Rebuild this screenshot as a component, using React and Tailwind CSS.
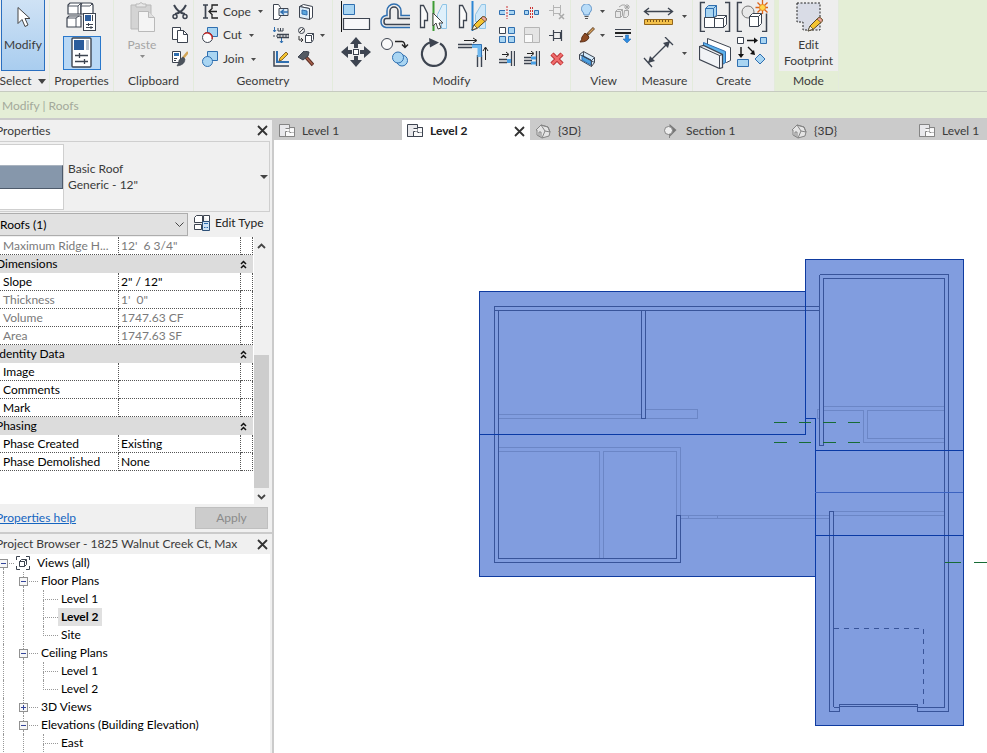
import React from "react";

const INK = "#3d4450";
const SKY = "#a9d5f2";
const BLUE = "#2f6fb0";

/* Icon drawings share one coordinate sheet; x and y select the part to show. */
function Icon({ x, y, w = 16, h = 16, children }) {
  return (
    <svg
      className="block shrink-0"
      width={w}
      height={h}
      viewBox={`${x} ${y} ${w} ${h}`}
      fill="none"
      stroke={INK}
      aria-hidden="true"
    >
      {children}
    </svg>
  );
}

function Big({ x, y, children }) {
  return (
    <Icon x={x} y={y} w={32} h={32}>
      {children}
    </Icon>
  );
}

function Caret() {
  return (
    <svg className="block shrink-0" width="5" height="3" viewBox="0 0 5 3" aria-hidden="true">
      <path d="M0 0h5L2.500 3z" fill="#4a4a4a" />
    </svg>
  );
}

function Tool({ label, className = "", children }) {
  return (
    <button type="button" aria-label={label} className={`flex items-center ${className}`}>
      {children}
    </button>
  );
}

function Panel({ title, className = "", titleClass = "", children }) {
  return (
    <section className={`flex shrink-0 flex-col border-r border-[#e3ebdc] bg-[#eeeeee] ${className}`}>
      <div className="flex h-[71px]">{children}</div>
      <h2 className={`flex h-5 items-center justify-center ${titleClass}`}>{title}</h2>
    </section>
  );
}

function Pencil({ x, y }) {
  return (
    <g transform={`translate(${x} ${y})`}>
      <path d="M0 14l2-5 8-8q2-1 3.500 .5t.5 3l-9 8z" fill="#f4c430" stroke="#5b4520" />
      <path d="M0 14l2-5 3 3z" fill="#fff3d0" stroke="#3b3b3b" strokeWidth=".7" />
      <path d="M10 1q2-1 3.500 .5t.5 3l-1 1-4-3.500z" fill="#f0a9a0" stroke="#5b4520" strokeWidth=".7" />
    </g>
  );
}

function Ribbon() {
  return (
    <header className="flex h-[92px] shrink-0 overflow-hidden border-b border-[#c6cbc0] bg-[#e4eed6]">
      <Panel
        className="w-[50px]"
        titleClass="gap-1.5"
        title={
          <>
            <span className="-ml-1">Select</span>
            <svg width="8" height="5" viewBox="0 0 8 5" aria-hidden="true">
              <path d="M0 0h8L4 5z" fill="#444" />
            </svg>
          </>
        }
      >
        <button
          type="button"
          className="ml-px flex h-[71px] w-11 flex-col items-center border border-t-0 border-[#2a6fc0] bg-linear-to-b from-[#cfe2f5] to-[#a9cdef]"
        >
          <Icon x={12} y={0} w={20} h={36}>
            <path
              d="M17 7.500v16l4-4 3 7 3-1.500-3-6.500h5z"
              fill="#fff"
              stroke="#444"
              strokeLinejoin="round"
            />
          </Icon>
          <span className="leading-[18px]">Modify</span>
        </button>
      </Panel>

      <Panel className="w-16" title="Properties">
        <div className="flex w-full flex-col items-center">
          <Tool label="Type properties">
            <Icon x={66} y={0} w={34} h={36}>
              <g fill="#fff" strokeWidth="1.200">
                <path d="M71 3h11v11H69V5z" />
                <path d="M83 3h9l2 2v9H82V5z" />
                <path d="M70 16h12v11H68V18z" />
              </g>
              <path d="M69 6h10l3-3M79 6v8M82 6h9l3-3M68 18h9l3-2M77 18v9" strokeWidth=".9" />
              <rect x="84.500" y="13.500" width="12" height="17" fill="#fff" />
              <path d="M86 15h6v6h-6z" fill="#2e5f9e" stroke="none" />
              <path d="M93.500 15v6M87 24.500h7M87 27.500h7M89.500 23v3M92 26v3" />
            </Icon>
          </Tool>
          <button
            type="button"
            aria-label="Properties palette"
            className="flex h-[34px] w-[38px] items-center justify-center border border-[#2a78cc] bg-[#b9d8f5]"
          >
            <Icon x={71} y={37} w={22} h={32}>
              <rect x="72" y="38" width="19" height="29" rx="1" fill="#fff" strokeWidth="1.400" />
              <path d="M74 40h10v10H74z" fill="#2a5c9c" stroke="none" />
              <path d="M86 40h3v10h-3z" fill="#b9c3cf" stroke="none" />
              <path d="M75 55.500h13M79.500 53v5M75 61.500h13M84.500 59v5" strokeWidth="1.300" />
            </Icon>
          </button>
        </div>
      </Panel>

      <Panel className="w-20" title="Clipboard">
        <button type="button" disabled className="ml-2.5 flex w-9 flex-col items-center text-[#a5a5a5]">
          <Icon x={126} y={0} w={32} h={36}>
            <g stroke="#b9b9b9">
              <path d="M131 5h20v24h-20z" fill="#d4d4d4" />
              <path d="M136 7V4h3q2-3 4 0h3v3z" fill="#e8e8e8" />
              <path d="M138.500 11.500h10l6 6v14h-16z" fill="#f4f4f4" />
              <path d="M148.500 11.500v6h6" fill="#e0e0e0" />
            </g>
          </Icon>
          <span className="leading-[18px]">Paste</span>
          <span className="mt-px opacity-60">
            <Caret />
          </span>
        </button>
        <div className="ml-3 grid grid-rows-3">
          <Tool label="Cut to clipboard">
            <Icon x={172} y={3}>
              <path d="M174 4q4 8 11 9M186 4q-4 8-11 9" strokeWidth="2" />
              <circle cx="175" cy="15.500" r="2" strokeWidth="1.500" />
              <circle cx="185" cy="15.500" r="2" strokeWidth="1.500" />
            </Icon>
          </Tool>
          <Tool label="Copy to clipboard">
            <Icon x={172} y={27}>
              <path d="M172.500 27.500h8v12h-8z" fill="#fff" />
              <path d="M177.500 30.500h6l4 4v8h-10z" fill="#fff" />
              <path d="M183.500 30.500v4h4" />
            </Icon>
          </Tool>
          <Tool label="Match type">
            <Icon x={172} y={51}>
              <path d="M172.500 51.500h8v11h-8z" fill="#fff" />
              <path d="M174 53h5v3h-5z" fill={BLUE} stroke="none" />
              <path d="M174 58.500h3M174 60.500h2" />
              <path d="M188 52l-5 6" stroke="#d2a557" strokeWidth="2.500" />
              <path d="M183 57l2 2q0 6-8 7 2-3 2-6z" fill="#4c535c" strokeWidth=".6" />
            </Icon>
          </Tool>
        </div>
      </Panel>

      <Panel className="w-[139px]" title="Geometry">
        <div className="grid w-[71px] grid-rows-3 pl-2">
          <button type="button" className="flex items-center gap-[5px]">
            <Icon x={202} y={3}>
              <path d="M203 4h5M203 17h5M205.500 4v13" strokeWidth="1.700" />
              <path d="M218 4h-6v4M218 17h-6v-4M209 10.500h8M212.500 7l-3.500 3.500 3.500 3.500" strokeWidth="1.300" stroke="#222" />
            </Icon>
            Cope
            <span className="ml-0.5"><Caret /></span>
          </button>
          <button type="button" className="flex items-center gap-[5px]">
            <Icon x={202} y={27}>
              <path d="M207.500 27.500h10v9h-10z" fill={SKY} stroke={BLUE} />
              <circle cx="207.500" cy="37.500" r="5" fill="#fff" />
              <path d="M204 34a5 5 0 0 1 8 5" stroke="#c22" strokeWidth="1.300" />
            </Icon>
            Cut
            <span className="ml-0.5"><Caret /></span>
          </button>
          <button type="button" className="flex items-center gap-[5px]">
            <Icon x={202} y={51}>
              <path d="M207.500 51.500h10v9h-10z" fill={SKY} stroke={BLUE} />
              <circle cx="207.500" cy="61.500" r="5" fill={SKY} stroke={BLUE} />
            </Icon>
            Join
            <span className="ml-0.5"><Caret /></span>
          </button>
        </div>
        <div className="ml-2 grid grid-rows-3">
          <Tool label="Join roof">
            <Icon x={273} y={3}>
              <path d="M273.500 3.500h5l2 3v9l-2 3h-5z" fill="#fff" />
              <path d="M279 7.500h9v7h-9z" fill="#ddeaf5" />
              <path d="M288 11h-6M284 8.500l-3 2.500 3 2.500" stroke={BLUE} strokeWidth="1.500" />
            </Icon>
          </Tool>
          <Tool label="Wall joins">
            <Icon x={273} y={27}>
              <path d="M274.500 27v5M273 30l1.500 2 1.500-2M281.500 43v-5M280 41l1.500 2 1.500-2" stroke={BLUE} />
              <path d="M278 28v3h5v-3M280.500 28v3" />
              <path d="M277 34.500h12M277 37.500h12" strokeWidth="1.500" />
              <path d="M273 36h16" strokeDasharray="2 1" />
            </Icon>
          </Tool>
          <Tool label="Beam joins">
            <Icon x={273} y={51}>
              <path d="M274 51v15h15" strokeWidth="1.500" />
              <path d="M277 51v11h12" stroke={BLUE} strokeWidth="2" />
              <path d="M279 61l1-3 6-6 2 2-6 6z" fill="#f4c430" stroke="#6b4a17" strokeWidth=".8" />
            </Icon>
          </Tool>
        </div>
        <div className="ml-[9px] grid grid-rows-3">
          <Tool label="Split face">
            <Icon x={298} y={3}>
              <path d="M299.500 5.500l4-2 9 2v11l-3 2v-11z" fill="#fff" />
              <path d="M299.500 5.500l10 2v11l-10-2z" fill="#dcecf8" />
              <path d="M302 9l5 1v4l-5-1z" fill="#5aa6dd" stroke={BLUE} />
            </Icon>
          </Tool>
          <Tool label="Paint" className="gap-[6px]">
            <Icon x={298} y={27}>
              <circle cx="301.500" cy="30.500" r="3" />
              <path d="M299.500 32.500l4-4M299 36v4h4M301 38l2 2-2 2" stroke="#333" />
              <path d="M305.500 35.500l2-2h6v6l-2 3h-6zM305.500 35.500h6v6M311.500 35.500l2-2" fill="#fff" />
            </Icon>
            <Caret />
          </Tool>
          <Tool label="Demolish">
            <Icon x={298} y={51}>
              <path d="M305 56l8 9" stroke="#5a2e24" strokeWidth="3.500" />
              <path d="M305.500 56.500l7 8" stroke="#a8604c" strokeWidth="1.500" />
              <path d="M298 57l6-6 5 1-1 4-5 4z" fill="#555b63" />
            </Icon>
          </Tool>
        </div>
      </Panel>

      <Panel className="w-[238px]" title="Modify">
        <div className="ml-[7px] grid h-[69px] grid-cols-4 content-between gap-x-[7px]">
          <Tool label="Align">
            <Big x={340} y={0}>
              <path d="M341.500 1v31" stroke="#111" />
              <path d="M343.500 4.500h11v10h-11z" fill={SKY} stroke={BLUE} />
              <path d="M343.500 18.500h26v11h-26z" fill="#f7f7f9" strokeWidth="1.200" />
            </Big>
          </Tool>
          <Tool label="Offset">
            <Big x={379} y={0}>
              <path d="M410 15.500h-9V11a7 7 0 0 0-14 0v4.500h-1q-5 1-5 6t5 6h24" stroke={BLUE} strokeWidth="1.500" />
              <path d="M410 18.500h-12V11a4 4 0 0 0-8 0v7.500h-4q-2 0-2 3t2 3h24" strokeWidth="1.500" />
            </Big>
          </Tool>
          <Tool label="Mirror pick axis">
            <Big x={418} y={0}>
              <path d="M420.500 5.500h3l4 8v7h-3v7h-4z" fill="#fafafa" strokeWidth="1.300" />
              <path d="M446.500 4.500h-4l-5 10v7h4v7h5z" fill="#dff0fb" stroke="#8fc4e6" />
              <path d="M433.500 1v30" stroke="#3f9c35" strokeWidth="2" />
              <path d="M433 13v13l3-3 2 6 3-1-2-5h4z" fill="#fff" stroke="#444" />
            </Big>
          </Tool>
          <Tool label="Mirror draw axis">
            <Big x={457} y={0}>
              <path d="M459.500 5.500h3l4 8v7h-3v7h-4z" fill="#fafafa" strokeWidth="1.300" />
              <path d="M485.500 4.500h-4l-6 10v7h4v7h6z" fill="#cfe8f9" stroke="#8fc4e6" />
              <path d="M472.500 1v30" stroke="#2c86d4" strokeWidth="2" />
              <Pencil x={472} y={16} />
            </Big>
          </Tool>
          <Tool label="Move">
            <Big x={340} y={37}>
              <g fill={INK} stroke="none">
                <path d="M356 37l6 7h-4v4h-4v-4h-4zM356 67l6-7h-4v-4h-4v4h-4zM341 52l7-6v4h4v4h-4v4zM371 52l-7-6v4h-4v4h4v4z" />
              </g>
              <rect x="353.500" y="49.500" width="5" height="5" fill="#fff" />
            </Big>
          </Tool>
          <Tool label="Copy">
            <Big x={379} y={37}>
              <circle cx="387" cy="44" r="5.500" fill="#fafafa" />
              <path d="M395 41.500h7q3 0 3 6M402 44.500l3 3 3-3" stroke="#222" strokeWidth="1.400" />
              <circle cx="402" cy="60.500" r="5.500" fill={SKY} stroke={BLUE} />
              <circle cx="398" cy="57.500" r="5.500" fill={SKY} stroke={BLUE} />
            </Big>
          </Tool>
          <Tool label="Rotate">
            <Big x={418} y={37}>
              <path d="M440 43.500a12 12 0 1 1-10-1" strokeWidth="2.200" />
              <path d="M429 38l10 4.500-9 5z" fill={INK} stroke="none" />
            </Big>
          </Tool>
          <Tool label="Trim to corner">
            <Big x={457} y={37}>
              <path d="M464 40.500h12M473 38l4 2.500-4 2.500M485.500 60V48M483 51l2.500-4 2.500 4" stroke="#222" />
              <path d="M458 44.500h14M458 47.500h14M477.500 55v12M481.500 55v12" strokeWidth="1.400" />
              <path d="M472 46h7.500v11" stroke="#6cb7ef" strokeWidth="4" />
              <path d="M472 44.500h9.500V57" stroke={BLUE} />
            </Big>
          </Tool>
        </div>
        <div className="ml-2.5 grid h-[71px] grid-cols-3 grid-rows-3 gap-x-[9px]">
          <Tool label="Split element">
            <Icon x={499} y={3}>
              <path d="M499.500 9.500h15v4h-15z" fill={SKY} stroke={BLUE} />
              <path d="M505 9h4v5h-4z" fill="#eee" stroke="none" />
              <path d="M507 5v13" stroke="#c33" strokeDasharray="2 1" />
            </Icon>
          </Tool>
          <Tool label="Split with gap">
            <Icon x={524} y={3}>
              <path d="M524.500 9.500h4v4h-4zM534.500 9.500h4v4h-4z" fill={SKY} stroke={BLUE} />
              <path d="M530.500 6v11M532.500 6v11" stroke="#c33" strokeDasharray="2 1" />
            </Icon>
          </Tool>
          <Tool label="Unpin">
            <Icon x={549} y={3}>
              <path d="M549 9.500h4M553.500 4v11M553.500 6.500h7v6h-7M560.500 4v8" stroke="#b5b5b5" />
              <path d="M559 13l5 5M564 13l-5 5" stroke="#aaa" strokeWidth="1.500" />
            </Icon>
          </Tool>
          <Tool label="Array">
            <Icon x={499} y={27}>
              <path d="M499.500 27.500h6v6h-6z" fill="#fff" />
              <path d="M508.500 27.500h6v6h-6zM499.500 36.500h6v6h-6zM508.500 36.500h6v6h-6z" fill={SKY} stroke={BLUE} />
            </Icon>
          </Tool>
          <Tool label="Scale">
            <Icon x={524} y={27}>
              <path d="M524.500 27.500h15v15h-15z" fill="#e4e4e4" stroke="#b5b5b5" />
              <path d="M524.500 34.500h8v8h-8z" fill="#fafafa" stroke="#b5b5b5" />
            </Icon>
          </Tool>
          <Tool label="Pin">
            <Icon x={549} y={27}>
              <path d="M549 35.500h4M553.500 30v11M553.500 32.500h7v6h-7M561.500 30v11" strokeWidth="1.200" />
            </Icon>
          </Tool>
          <Tool label="Trim single">
            <Icon x={499} y={51}>
              <path d="M502 54.500h6M506 52l3 2.500-3 2.500" stroke="#222" />
              <path d="M499 59.500h8M499 62.500h8M511.500 51v15M514.500 51v15" strokeWidth="1.300" />
              <path d="M507 61h4" stroke="#49a0e5" strokeWidth="4" />
            </Icon>
          </Tool>
          <Tool label="Trim multiple">
            <Icon x={524} y={51}>
              <path d="M527 53.500h6M531 51l3 2.500-3 2.500" stroke="#222" />
              <path d="M524 57.500h8M524 60.500h8M524 63.500h8M536.500 51v15M539.500 51v15" strokeWidth="1.300" />
              <path d="M531 58h5M531 63h5" stroke="#49a0e5" strokeWidth="3" />
            </Icon>
          </Tool>
          <Tool label="Delete">
            <Icon x={549} y={51}>
              <path d="M552 54l10 10M562 54l-10 10" stroke="#b3282b" strokeWidth="4.500" />
              <path d="M552 54l10 10M562 54l-10 10" stroke="#ee6b6b" strokeWidth="2.500" />
            </Icon>
          </Tool>
        </div>
      </Panel>

      <Panel className="w-[66px]" title="View">
        <div className="ml-2 grid grid-rows-3">
          <Tool label="Reveal elements" className="gap-[5px]">
            <Icon x={579} y={3}>
              <path d="M584 14q0-2-2-4a5 5 0 1 1 9 0q-2 2-2 4z" fill="#b8dcf8" stroke="#5f93c8" />
              <path d="M584.500 15.500h4M585 17.500h3" stroke="#555" />
            </Icon>
            <Caret />
          </Tool>
          <Tool label="Override graphics" className="gap-[5px]">
            <Icon x={579} y={27}>
              <path d="M594 28l-7 7" stroke="#6a4a2e" strokeWidth="3" />
              <path d="M593.500 28.500l-5 5" stroke="#d9a35e" strokeWidth="1.200" />
              <path d="M585 33l4 4q-1 5-9 5 2-2 2-5z" fill="#8d4a22" stroke="#5a2f17" />
            </Icon>
            <Caret />
          </Tool>
          <Tool label="Selection box">
            <Icon x={579} y={51}>
              <path d="M579.500 54.500l4-3 11 6v5l-3 4-12-7z" fill="#d7ebfa" />
              <path d="M582 55l9 5v5l-9-5z" fill="#4ea1e0" stroke={BLUE} />
              <path d="M583.500 51.500v5l11 6M591.500 60.500l3-3M579.500 54.500l12 6v6" strokeWidth=".9" />
            </Icon>
          </Tool>
        </div>
        <div className="ml-2.5 grid grid-rows-3">
          <Tool label="Displace elements">
            <Icon x={614} y={3}>
              <g stroke="#a6a6a6">
                <path d="M614.500 10.500l2-2h5v6l-2 2h-5zM614.500 10.500h5v6M619.500 10.500l2-2M623.500 9.500h4v5l-2 2h-3z" fill="#e8e8e8" />
                <path d="M618 6l3-2h3M626 3v6M623 6h6M624 4l4 4M628 4l-4 4" />
              </g>
            </Icon>
          </Tool>
          <Tool label="Thin lines">
            <Icon x={614} y={27}>
              <path d="M614 29.500h16" />
              <path d="M614 33h16" strokeWidth="2" stroke="#222" />
              <path d="M614 36.500h8" />
              <path d="M624.500 35h3v4h2.500l-4 4-4-4h2.500z" fill="#2d8be0" stroke={BLUE} strokeWidth=".6" />
            </Icon>
          </Tool>
        </div>
      </Panel>

      <Panel className="w-14" title="Measure">
        <div className="ml-1.5 flex h-[69px] flex-col justify-between">
          <Tool label="Measure between references" className="gap-[7px]">
            <Big x={643} y={0}>
              <path d="M645 11.500h27M649 8l-4.500 3.500 4.500 3.500M668 8l4.500 3.500-4.500 3.500" strokeWidth="1.400" />
              <path d="M644.500 19.500h28v5h-28z" fill="#f3c04a" stroke="#93651b" />
              <path d="M647.500 20v2M650.500 20v2M653.500 20v2M656.500 20v2M659.500 20v2M662.500 20v2M665.500 20v2M668.500 20v2" stroke="#7c5514" />
            </Big>
            <Caret />
          </Tool>
          <Tool label="Aligned dimension" className="gap-[7px]">
            <Big x={643} y={37}>
              <path d="M648 63l22-22M644 58l8 9M665 37l8 8" strokeWidth="1.300" />
              <path d="M648 63l2-7 5 5zM670 41l-7 2 5 5z" fill={INK} stroke="none" />
            </Big>
            <Caret />
          </Tool>
        </div>
      </Panel>

      <Panel className="w-[82px]" title="Create">
        <div className="ml-1.5 grid h-[69px] grid-cols-2 content-between gap-x-[5px]">
          <Tool label="Create group">
            <Big x={699} y={0}>
              <path d="M705 2.500h-4.500v29h4.500M725 2.500h4.500v29H725" strokeWidth="1.500" />
              <path d="M705.500 8.500l3-3h8v10l-3 2h-8z" fill={SKY} stroke={BLUE} />
              <path d="M705.500 8.500h8v9M713.500 8.500l3-3" stroke={BLUE} />
              <path d="M704.500 17.500h10v10h-10zM714.500 17.500l3-2h9v9l-3 3h-9zM714.500 18.500h9v9M723.500 18.500l3-3" fill="#fff" />
            </Big>
          </Tool>
          <Tool label="Create similar">
            <Big x={736} y={0}>
              <path d="M742 2.500h-4.500v29h4.500M762 31.500h4.500v-18" strokeWidth="1.500" />
              <circle cx="748" cy="12" r="6" fill="#e8e8e8" stroke="#777" />
              <path d="M749.500 16.500l3-3h9v10l-3 3h-9zM749.500 16.500h9v10M758.500 16.500l3-3" fill="#fff" />
              <path d="M762.500 0v14M755.500 7.500h13M757.500 2.500l10 10M767.500 2.500l-10 10" stroke="#d9641c" strokeWidth="1.300" />
              <circle cx="762.500" cy="7.500" r="3" fill="#ffd84d" stroke="#ee8a1e" />
            </Big>
          </Tool>
          <Tool label="Create assembly">
            <Big x={699} y={37}>
              <path d="M707.500 38.500l23 9v13l-4 2-19-8z" fill="#fff" />
              <path d="M703.500 42.500l22 9v11l-3 2-19-8z" fill="#5eb2ec" stroke={BLUE} />
              <path d="M699.500 46.500l4-1 19 9v13l-3 1-20-9z" fill="#f1f3f6" strokeWidth="1.200" />
              <path d="M699.500 46.500l20 9 3-1M719.500 55.500v13" />
            </Big>
          </Tool>
          <Tool label="Create parts">
            <Big x={736} y={37}>
              <path d="M737.500 37.500h6v6h-6z" fill="#fff" />
              <path d="M760.500 37.500h6v6h-6zM737.500 59.500h11v7h-11zM760 54l5 5-5 5-5-5z" fill={SKY} stroke={BLUE} />
              <path d="M747 40.500h9M741 47v8M748 47l5 5" stroke="#111" strokeWidth="1.400" />
              <path d="M758 40.500l-4-3v6zM741 58l-3-4h6zM755 55l-5-1 4-4z" fill="#111" stroke="none" />
            </Big>
          </Tool>
        </div>
      </Panel>

      <Panel className="ml-1 w-[60px]" titleClass="bg-[#e4eed6]" title="Mode">
        <button type="button" className="flex w-full flex-col items-center">
          <Icon x={791} y={0} w={32} h={37}>
            <path d="M795 3h23v27h-17v-8h-6z" fill="#d9dce6" stroke="#222" strokeDasharray="2 1.500" />
            <Pencil x={806} y={17} />
          </Icon>
          <span className="leading-4">
            Edit
            <br />
            Footprint
          </span>
        </button>
      </Panel>
    </header>
  );
}

function CloseMark() {
  return (
    <svg className="block" width="11" height="11" viewBox="0 0 11 11" aria-hidden="true">
      <path d="M1 1l9 9M10 1l-9 9" stroke="#333" strokeWidth="1.800" />
    </svg>
  );
}

const ROWS = [
  { name: "Maximum Ridge H...", value: "12'  6 3/4\"", locked: true },
  { group: "Dimensions" },
  { name: "Slope", value: '2" / 12"' },
  { name: "Thickness", value: "1'  0\"", locked: true },
  { name: "Volume", value: "1747.63 CF", locked: true },
  { name: "Area", value: "1747.63 SF", locked: true },
  { group: "Identity Data" },
  { name: "Image", value: "" },
  { name: "Comments", value: "" },
  { name: "Mark", value: "" },
  { group: "Phasing" },
  { name: "Phase Created", value: "Existing" },
  { name: "Phase Demolished", value: "None" },
];

function PropertyTable() {
  return (
    <table className="w-[253px] table-fixed border-separate border-spacing-0 text-black">
      <colgroup>
        <col className="w-[119px]" />
        <col />
        <col className="w-3" />
      </colgroup>
      <tbody>
        {ROWS.map((row) =>
          row.group ? (
            <tr key={row.group} className="h-[18px] bg-[#dcdcdc]">
              <th colSpan={3} scope="colgroup" className="p-0 text-left font-normal leading-[18px]">
                <span className="flex items-center justify-between pr-[5px]">
                  <span className="-ml-1">{row.group}</span>
                  <button type="button" aria-label={`Collapse ${row.group}`}>
                    <svg className="block" width="9" height="9" viewBox="0 0 9 9" fill="none" aria-hidden="true">
                      <path d="M2 4l2.500-2.500L7 4M2 8l2.500-2.500L7 8" stroke="#111" strokeWidth="1.500" />
                    </svg>
                  </button>
                </span>
              </th>
            </tr>
          ) : (
            <tr key={row.name} className={`h-[18px] ${row.locked ? "text-[#7a7a7a]" : ""}`}>
              <th
                scope="row"
                className="border-r border-b border-dotted border-[#555] p-0 pl-[3px] text-left font-normal leading-[17px] whitespace-nowrap"
              >
                {row.name}
              </th>
              <td className="border-r border-b border-dotted border-[#555] p-0 pl-0.5 leading-[17px]">
                <input
                  aria-label={row.name}
                  defaultValue={row.value}
                  readOnly={row.locked}
                  className="block h-[17px] w-full bg-transparent leading-[17px] outline-none"
                />
              </td>
              <td className="border-r border-b border-dotted border-[#555] p-0" />
            </tr>
          ),
        )}
      </tbody>
    </table>
  );
}

function Properties() {
  return (
    <section className="bg-[#f0f0f0]">
      <div className="flex h-[21px] items-center justify-between pr-1">
        <h2 className="-ml-1">Properties</h2>
        <button type="button" aria-label="Close properties"><CloseMark /></button>
      </div>
      <button
        type="button"
        className="flex h-[71px] w-[270px] items-center border border-l-0 border-[#cfcfcf] pr-px text-left"
      >
        <span className="flex h-[66px] w-16 flex-col justify-center border border-l-0 border-[#cfcfcf] bg-white">
          <span className="h-6 border border-l-0 border-[#4d5a6b] border-t-[#a9b3bf] bg-[#8697ab]" />
        </span>
        <span className="ml-1 flex-1 leading-4">
          Basic Roof
          <br />
          Generic - 12"
        </span>
        <svg width="8" height="4" viewBox="0 0 8 4" aria-hidden="true">
          <path d="M0 0h8L4 4z" fill="#444" />
        </svg>
      </button>
      <div className="flex h-[25px] items-center">
        <div className="grid w-[188px] items-center">
          <select
            aria-label="Selected category"
            className="col-start-1 row-start-1 h-[23px] w-full appearance-none border border-l-0 border-[#adadad] bg-[#e1e1e1] text-black"
          >
            <option>Roofs (1)</option>
          </select>
          <svg
            className="pointer-events-none col-start-1 row-start-1 mr-1 justify-self-end"
            width="9"
            height="6"
            viewBox="0 0 9 6"
            fill="none"
            aria-hidden="true"
          >
            <path d="M.5 .5l4 4 4-4" stroke="#444" />
          </svg>
        </div>
        <button type="button" className="ml-1.5 flex h-full items-start gap-1 pt-0.5 leading-[18px] text-[#222]">
          <Icon x={194} y={214} w={17} h={18}>
            <path d="M194.500 217.500l2-2h6v7h-8zM203.500 215.500h6v6M194.500 224.500h7v5h-7zM203.500 215.500v6" fill="#fff" />
            <path d="M202.500 221.500h7v9h-7z" fill="#cfe3f5" stroke="#2c4f77" />
            <path d="M204 223.500h4M204 227.500h1.500M206.500 227.500h1.500" stroke={BLUE} />
          </Icon>
          Edit Type
        </button>
      </div>
      <div className="flex h-[267px]">
        <div className="w-[254px] bg-white">
          <PropertyTable />
        </div>
        <div className="flex w-[15px] flex-col items-center" aria-hidden="true">
          <svg className="mt-1.5 mb-[106px]" width="9" height="6" viewBox="0 0 9 6" fill="none">
            <path d="M1 5l3.500-3.500L8 5" stroke="#444" strokeWidth="1.800" />
          </svg>
          <span className="h-[133px] w-full bg-[#cdcdcd]" />
          <svg className="mt-1.5" width="9" height="6" viewBox="0 0 9 6" fill="none">
            <path d="M1 1l3.500 3.500L8 1" stroke="#444" strokeWidth="1.800" />
          </svg>
        </div>
      </div>
      <div className="flex h-7 items-center justify-between pr-1">
        <a href="#help" className="-ml-1 text-[#1565c0] underline">Properties help</a>
        <button type="button" disabled className="h-[22px] w-[73px] border border-[#bfbfbf] bg-[#cccccc] text-[#8a8a8a]">
          Apply
        </button>
      </div>
    </section>
  );
}

function Expander({ label, open = true, above = true, below = true }) {
  return (
    <span className="flex h-[18px] w-[9px] flex-col items-center">
      <span className={`h-[5px] ${above ? "border-l border-dotted border-[#999]" : ""}`} />
      <button
        type="button"
        aria-label={`${open ? "Collapse" : "Expand"} ${label}`}
        className="h-[9px] w-[9px] border border-[#919191] bg-[#f7f7f7]"
      >
        <svg className="block" width="7" height="7" viewBox="0 0 7 7" aria-hidden="true">
          <path d={open ? "M1 3.500h5" : "M1 3.500h5M3.500 1v5"} stroke="#34459a" />
        </svg>
      </button>
      <span className={`flex-1 ${below ? "border-l border-dotted border-[#999]" : ""}`} />
    </span>
  );
}

function Folder({ label, open }) {
  return (
    <li className="flex h-[18px]">
      <span className="w-1 border-r border-dotted border-[#999]" />
      <span className="w-[15px]" />
      <Expander label={label} open={open} />
      <span className="mt-[9px] mr-[3px] ml-px w-[9px] border-t border-dotted border-[#999]" />
      {label}
    </li>
  );
}

function Leaf({ label, active, last }) {
  return (
    <li className="flex h-[18px]">
      <span className="w-1 border-r border-dotted border-[#999]" />
      <span className="w-5 border-r border-dotted border-[#999]" />
      <span className="w-[19px]" />
      <span className="w-[15px]">
        <span className="block h-2.5 border-b border-l border-dotted border-[#999]" />
        <span className={`block h-2 ${last ? "" : "border-l border-dotted border-[#999]"}`} />
      </span>
      <span className={active ? "bg-[#e0e0e0] px-[3px] font-bold" : "px-[3px]"}>{label}</span>
    </li>
  );
}

function Browser() {
  return (
    <section className="flex min-h-0 flex-1 flex-col border-t-2 border-[#cbcbcb] bg-[#f0f0f0]">
      <div className="flex h-5 shrink-0 items-center justify-between pr-1">
        <h2 className="-ml-1 whitespace-nowrap">Project Browser - 1825 Walnut Creek Ct, Max</h2>
        <button type="button" aria-label="Close project browser"><CloseMark /></button>
      </div>
      <ul className="mr-0.5 min-h-0 flex-1 overflow-hidden bg-white leading-[18px] text-black">
        <li className="flex h-[18px]">
          <span className="-ml-px">
            <Expander label="Views" above={false} />
          </span>
          <span className="mt-[9px] mr-0.5 ml-px w-[5px] border-t border-dotted border-[#999]" />
          <span className="mt-px mr-[7px]">
            <Icon x={0} y={0} w={14} h={16}>
              <path d="M4 1.500H.5V5M10 1.500h3.500V5M.5 11v3.500H4M13.500 11v3.500H10" />
              <path d="M3.500 6.500l2-2h5v5l-2 2h-5zM3.500 6.500h5v5M8.500 6.500l2-2" />
            </Icon>
          </span>
          <span>Views (all)</span>
        </li>
        <Folder label="Floor Plans" open />
        <Leaf label="Level 1" />
        <Leaf label="Level 2" active />
        <Leaf label="Site" last />
        <Folder label="Ceiling Plans" open />
        <Leaf label="Level 1" />
        <Leaf label="Level 2" last />
        <Folder label="3D Views" open={false} />
        <Folder label="Elevations (Building Elevation)" open />
        <Leaf label="East" />
      </ul>
    </section>
  );
}

const TAB_ICONS = {
  plan: (
    <>
      <path d="M.5 1.500h10v3h5v9H.5z" fill="#e9e9ec" />
      <path d="M6.500 5.500h9v8h-9z" fill="#fafafa" stroke="none" />
      <path d="M6.500 13.500v-5M6.500 5.500h4v-3M15.500 4.500v9H.5" />
      <path d="M6.500 8.500h4v-3M10.500 9.500h4" strokeDasharray="2 1" />
    </>
  ),
  house: (
    <>
      <path d="M1 7l5-5 7 2 2 5-1 4-7 2-5-3V7z" fill="#e4e4e4" />
      <path d="M1 7l5-5 4 6-3 7M6 2l7 2 2 5M10 8l5 1M4 13V9h2v5" />
    </>
  ),
  section: (
    <>
      <path d="M6.500 1l7 6-7 7z" fill="#777" stroke="none" />
      <circle cx="5.500" cy="7.500" r="4" fill="#eee" />
      <path d="M6.500 11v4" />
    </>
  ),
};

const TABS = [
  { title: "Level 1", icon: "plan" },
  { title: "Level 2", icon: "plan", active: true },
  { title: "{3D}", icon: "house" },
  { title: "Section 1", icon: "section" },
  { title: "{3D}", icon: "house" },
  { title: "Level 1", icon: "plan" },
];

function Tabs() {
  return (
    <nav className="flex h-5 shrink-0 overflow-hidden bg-[#cbcbcb]">
      {TABS.map((tab, i) => (
        <div
          key={i}
          className={`flex w-32 shrink-0 items-center justify-between pt-0.5 pr-[5px] pl-[5px] ${
            tab.active ? "bg-white font-bold text-[#222]" : ""
          }`}
        >
          <button type="button" className="flex items-center gap-[7px]">
            <svg
              className="block shrink-0"
              width="16"
              height="16"
              viewBox="0 0 16 16"
              fill="none"
              stroke={tab.active ? INK : "#858585"}
              aria-hidden="true"
            >
              {TAB_ICONS[tab.icon]}
            </svg>
            {tab.title}
          </button>
          {tab.active && (
            <button type="button" aria-label="Close view"><CloseMark /></button>
          )}
        </div>
      ))}
    </nav>
  );
}

function FloorPlan() {
  return (
    <svg
      className="block shrink-0"
      width="713"
      height="613"
      viewBox="274 140 713 613"
      fill="none"
      shapeRendering="crispEdges"
      role="img"
      aria-label="Level 2 roof plan"
    >
      <path
        d="M479.500 291.500h326v-32h158v466h-148v-149h-336z"
        fill="#819ddf"
        stroke="#0f3ba0"
      />
      {/* Underlay walls */}
      <g stroke="#6b86c6">
        <path d="M498 414.500h144M498 418.500h144M646 409.500h51.500v9H646" />
        <path d="M498 447.500h182.500v68M498 451.500h101.500v106M603.500 558V451.500h73v64M680 515.500h150M680 518.500h149M688.500 515v3M717.500 515v3" />
        <path d="M824 406.500h121M820 409.500h-2.500v9h2M824 410.500h39.500v32H945M945 410.500h-77.500v28H945" />
        <path d="M834 511.500h111M834 515.500h111" />
      </g>
      {/* Cut walls */}
      <g stroke="#38549a">
        <path d="M820 306.500H494.500v256h186v-47h-4v43h-178v-248M495 310.500h324" />
        <path d="M641.500 310v108.500h4V310" />
        <path d="M819.500 274.500v171h4v-167h121v429h-27M819.500 274.500h129v437h-31v-7h-78v7h-10v-200h4v195" />
        <path d="M834 707.500h5M839 706.500h78" />
        <path d="M834 628.500h89.500V707" strokeDasharray="5 5" />
      </g>
      {/* Roof edges and ridges */}
      <g stroke="#0a3aa5">
        <path d="M479 434.500h326.500v-143M805.500 418.500h10v158M805.500 418v16M815 450.500h148M815 535.500h148" />
        <path d="M815 492.500h148" stroke="#3c63c0" />
      </g>
      <g stroke="#176b35">
        <path d="M774 422.500h86M774 442.500h86" strokeDasharray="13 12 12 12" />
        <path d="M945 562.500h16M974 562.500h13" />
      </g>
    </svg>
  );
}

export default function App() {
  return (
    <div className="flex h-screen flex-col overflow-hidden bg-[#eeeeee] font-['Lato','Open_Sans',sans-serif] text-xs text-[#3a3a3a]">
      <Ribbon />
      <div className="flex h-[26px] shrink-0 items-center bg-[#e4eed6] pt-0.5 pl-0.5 text-[#a3a99b]">
        Modify | Roofs
      </div>
      <div className="flex min-h-0 flex-1 border-t-2 border-[#cbcbcb]">
        <aside className="flex w-[274px] shrink-0 flex-col border-r-2 border-[#cbcbcb]">
          <Properties />
          <Browser />
        </aside>
        <main className="flex min-w-0 flex-1 flex-col overflow-hidden bg-white">
          <Tabs />
          <FloorPlan />
        </main>
      </div>
    </div>
  );
}
